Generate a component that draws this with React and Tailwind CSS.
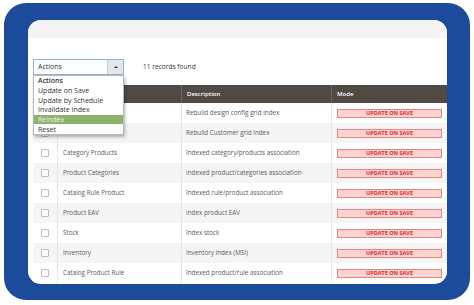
import React from "react";

const rows = [
  ["Design Config Grid", "Rebuild design config grid index"],
  ["Customer Grid", "Rebuild Customer grid index"],
  ["Category Products", "Indexed category/products association"],
  ["Product Categories", "Indexed product/categories association"],
  ["Catalog Rule Product", "Indexed rule/product association"],
  ["Product EAV", "Index product EAV"],
  ["Stock", "Index stock"],
  ["Inventory", "Inventory index (MSI)"],
  ["Catalog Product Rule", "Indexed product/rule association"],
];

const options = ["Actions", "Update on Save", "Update by Schedule", "Invalidate Index", "Reindex", "Reset"];

export default function App() {
  return (
    <div
      className="w-[474px] h-[305px] bg-white pt-[3px] pl-[4px] overflow-hidden"
      style={{ fontFamily: '"Open Sans", "Noto Sans", sans-serif' }}
    >
      <div className="w-[466px] h-[297px] bg-[#1d4b9b] rounded-[22px] pt-[17px] pl-[24px]">
        <div className="relative w-[419px] h-[264px] bg-white rounded-[13px] overflow-hidden flex flex-col">
          <div className="h-[18px] bg-[#f4f4f4] shrink-0" />
          <div className="h-[47px] shrink-0 pl-[5px] pt-[21px] flex items-start">
            <div className="relative">
              <div className="w-[91px] h-[16px] flex border border-[#8eb1de] bg-white">
                <div className="flex-1 flex items-center pl-[4px] text-[7px] text-[#333]">Actions</div>
                <div className="w-[16px] h-full bg-[#e4e6ea] border-l border-[#c8ccd2] flex items-center justify-center">
                  <div className="w-0 h-0 border-l-[2px] border-r-[2px] border-b-[2.5px] border-l-transparent border-r-transparent border-b-[#333]" />
                </div>
              </div>
              <div className="absolute left-0 top-[16px] w-[91px] bg-white border border-[#b8b8b8] shadow-[1px_2px_3px_rgba(0,0,0,0.3)] z-10">
                {options.map((o, i) => (
                  <div
                    key={o}
                    className={
                      "h-[9.7px] flex items-center pl-[4px] text-[7px] leading-none " +
                      (o === "Reindex"
                        ? "bg-[#8db36a] text-[#eef5e6]"
                        : i === 0
                        ? "text-[#333] font-semibold"
                        : "text-[#333]")
                    }
                  >
                    {o}
                  </div>
                ))}
              </div>
            </div>
            <div className="ml-[19px] h-[16px] flex items-center text-[6.6px] text-[#333]">11 records found</div>
          </div>
          <div className="ml-[5px] w-[414px] flex flex-col">
            <div className="h-[18px] flex bg-[#514943] text-white text-[6px] font-semibold">
              <div className="w-[25px] border-r border-[#6e6661]" />
              <div className="w-[124px] border-r border-[#6e6661]" />
              <div className="w-[150px] border-r border-[#6e6661] flex items-center pl-[5px]">Description</div>
              <div className="w-[115px] flex items-center pl-[5px]">Mode</div>
            </div>
            {rows.map(([name, desc], i) => (
              <div
                key={name}
                className={"h-[20px] flex text-[6.3px] text-[#5a5a5a] " + (i % 2 === 1 ? "bg-[#f5f5f5]" : "bg-white")}
              >
                <div className="w-[25px] border-r border-[#e6e6e6] flex items-center justify-center pr-[1px]">
                  <div className="w-[8px] h-[8px] border border-[#bdbdbd] rounded-[1px] bg-white" />
                </div>
                <div className="w-[124px] border-r border-[#e6e6e6] flex items-center pl-[5px]">{name}</div>
                <div className="w-[150px] border-r border-[#e6e6e6] flex items-center pl-[4px]">{desc}</div>
                <div className="w-[115px] flex items-center pl-[5px] pt-[1px]">
                  <div className="w-[105px] h-[8.5px] bg-[#fbd3d3] border border-[#e88686] flex items-center justify-center text-[5.5px] font-bold text-[#e22626] leading-none">
                    UPDATE ON SAVE
                  </div>
                </div>
              </div>
            ))}
          </div>
        </div>
      </div>
    </div>
  );
}
